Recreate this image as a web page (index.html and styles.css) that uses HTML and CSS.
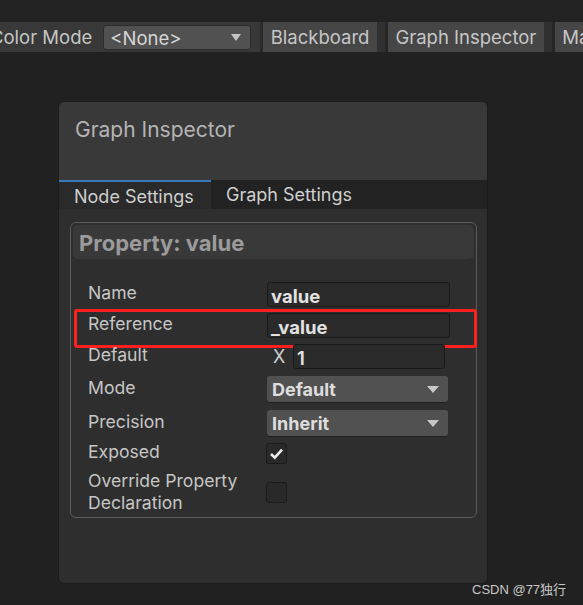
FILE: index.html
```html
<!DOCTYPE html>
<html>
<head>
<meta charset="utf-8">
<link rel="stylesheet" href="styles.css">
</head>
<body>
<div class="top"></div>
<div class="toolbar">
  <span class="tb-label">Color Mode</span>
  <div class="tb-drop"><span>&lt;None&gt;</span><span class="arrow"></span></div>
  <div class="tb-sep"></div>
  <div class="tb-btn">Blackboard</div>
  <div class="tb-gap"></div>
  <div class="tb-btn">Graph Inspector</div>
  <div class="tb-gap"></div>
  <div class="tb-btn">Main Preview</div>
</div>
<div class="stage">
  <div class="panel">
    <div class="panel-title">Graph Inspector</div>
    <div class="tabs">
      <div class="tab active">Node Settings</div>
      <div class="tab">Graph Settings</div>
    </div>
    <div class="panel-body">
      <div class="box">
        <div class="box-head">Property: value</div>
        <div class="rows">
          <div class="row r25"><span class="lbl">Name</span><div class="field">value</div></div>
          <div class="row r25 ref"><span class="lbl">Reference</span><div class="field">_value</div><div class="highlight"></div></div>
          <div class="row r25"><span class="lbl">Default</span><div class="vec"><span class="x">X</span><div class="field small">1</div></div></div>
          <div class="row r26 mode"><span class="lbl">Mode</span><div class="drop">Default<span class="arrow"></span></div></div>
          <div class="row r26 prec"><span class="lbl">Precision</span><div class="drop">Inherit<span class="arrow"></span></div></div>
          <div class="row r22"><span class="lbl">Exposed</span><div class="check"><svg width="15" height="13" viewBox="0 0 15 13"><polyline points="2,7 5.8,10.6 13,2.6" fill="none" stroke="#ececec" stroke-width="2.6"/></svg></div></div>
          <div class="row r42"><span class="lbl two">Override Property<br>Declaration</span><div class="check"></div></div>
        </div>
      </div>
    </div>
  </div>
</div>
<div class="watermark">CSDN @77独行</div>
</body>
</html>
```
FILE: styles.css
```css
html, body {
  margin: 0;
  padding: 0;
}
body {
  width: 583px;
  height: 605px;
  overflow: hidden;
  background: #212121;
  font-family: Inter, "Noto Sans", "Noto Sans CJK SC", sans-serif;
  position: relative;
}
.top {
  height: 22px;
  background: #222222;
}
.toolbar {
  height: 30px;
  background: #383838;
  display: flex;
  align-items: center;
  white-space: nowrap;
  overflow: hidden;
}
.toolbar > * {
  flex-shrink: 0;
}
.tb-label {
  margin-left: -10px;
  font-size: 18.5px;
  color: #c6c6c6;
  margin-right: 11px;
}
.tb-drop {
  width: 148px;
  height: 25px;
  box-sizing: border-box;
  background: #515151;
  border: 1px solid #2c2c2c;
  border-radius: 3px;
  display: flex;
  align-items: center;
  justify-content: space-between;
  padding: 1px 9px 0 6px;
  font-size: 18.5px;
  color: #d6d6d6;
  margin-right: 9px;
}
.arrow {
  width: 0;
  height: 0;
  border-left: 5px solid transparent;
  border-right: 5px solid transparent;
  border-top: 7px solid #c4c4c4;
}
.tb-sep {
  width: 3px;
  height: 30px;
  background: #2a2a2a;
}
.tb-gap {
  width: 8px;
  height: 30px;
  background: #303030;
  border-right: 3px solid #262626;
}
.tb-btn {
  height: 30px;
  background: #464646;
  display: flex;
  align-items: center;
  padding: 0 7.5px;
  font-size: 18.5px;
  color: #c6c6c6;
}
.stage {
  padding: 50px 0 0 59px;
}
.panel {
  width: 428px;
  height: 481px;
  background: #2e2e2e;
  border-radius: 5px;
  overflow: hidden;
  display: flex;
  flex-direction: column;
  box-shadow: 0 0 0 1px #1c1c1c;
}
.panel-title {
  height: 78px;
  box-sizing: border-box;
  background: #393939;
  padding: 15px 0 0 16px;
  font-size: 21px;
  color: #b4b4b4;
}
.tabs {
  height: 29px;
  background: #222222;
  display: flex;
}
.tab {
  font-size: 18px;
  color: #cfcfcf;
  display: flex;
  align-items: center;
  padding: 0 15px;
  box-sizing: border-box;
}
.tab.active {
  width: 152px;
  background: #2a2a2a;
  border-top: 2px solid #3a79bb;
  padding-top: 1px;
}
.panel-body {
  flex: 1;
  padding: 13px 10px 0 11px;
}
.box {
  height: 296px;
  box-sizing: border-box;
  border: 1px solid #5c5c5c;
  border-radius: 6px;
  padding: 2px 2px 0 2px;
}
.box-head {
  height: 34px;
  background: #393939;
  border-radius: 5px;
  font-size: 22px;
  font-weight: 700;
  color: #9b9b9b;
  display: flex;
  align-items: center;
  padding: 2px 0 0 6px;
  box-sizing: border-box;
}
.rows {
  padding: 23px 0 0 15px;
  display: flex;
  flex-direction: column;
  gap: 6px;
}
.row {
  position: relative;
  display: grid;
  grid-template-columns: 179px 1fr;
  align-items: center;
}
.r25 { height: 25px; }
.r26 { height: 26px; }
.r22 { height: 22px; }
.r42 { height: 44px; }
.mode { margin-top: 1px; }
.prec { margin-top: 2px; }
.lbl {
  font-size: 17.6px;
  color: #c6c6c6;
  margin-top: -4px;
}
.lbl.two {
  margin-top: 0;
  line-height: 22px;
}
.field {
  width: 183px;
  height: 25px;
  box-sizing: border-box;
  background: #2a2a2a;
  border: 1px solid #191919;
  border-radius: 3px;
  font-size: 18.5px;
  font-weight: 700;
  color: #e2e2e2;
  display: flex;
  align-items: center;
  padding: 2px 0 0 3px;
}
.vec {
  display: flex;
  align-items: center;
}
.x {
  font-size: 18px;
  color: #cfcfcf;
  width: 26px;
  padding-left: 6px;
  box-sizing: border-box;
}
.field.small {
  width: 152px;
  font-weight: 600;
}
.drop {
  width: 181px;
  height: 26px;
  box-sizing: border-box;
  background: #515151;
  border-radius: 3px;
  box-shadow: 0 1px 0 #1f1f1f;
  display: flex;
  align-items: center;
  justify-content: space-between;
  padding: 1px 9px 0 5px;
  font-size: 18px;
  font-weight: 700;
  color: #dedede;
}
.drop .arrow {
  border-top-color: #c8c8c8;
  border-left-width: 6px;
  border-right-width: 6px;
  border-top-width: 7px;
}
.check {
  width: 21px;
  height: 21px;
  box-sizing: border-box;
  background: #292929;
  border: 1px solid #1b1b1b;
  border-radius: 3px;
  margin-left: -1px;
  display: flex;
  align-items: center;
  justify-content: center;
}
.highlight {
  position: absolute;
  left: -14px;
  top: -4px;
  width: 403px;
  height: 39px;
  box-sizing: border-box;
  border: 3px solid #fe1f1f;
  border-radius: 3px;
}
.watermark {
  position: absolute;
  left: 472px;
  top: 579px;
  font-family: "Liberation Sans", "Noto Sans CJK SC", sans-serif;
  font-size: 13px;
  color: #c8c8c8;
}
```
